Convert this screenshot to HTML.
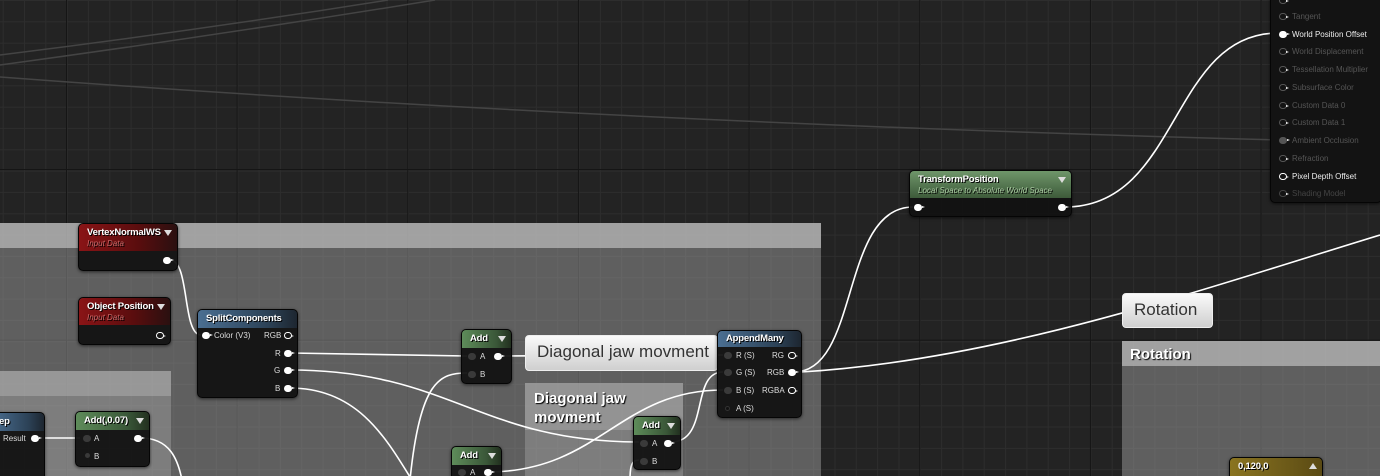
<!DOCTYPE html>
<html><head><meta charset="utf-8"><style>
*{margin:0;padding:0;box-sizing:border-box}
html,body{width:1380px;height:476px;overflow:hidden}
body{position:relative;font-family:"Liberation Sans",sans-serif;}
#w{position:absolute;left:0;top:0;width:1380px;height:476px;overflow:hidden;
background-color:#232323;
background-image:
linear-gradient(to right,#151515 0,#151515 1px,transparent 1px),
linear-gradient(to bottom,#151515 0,#151515 1px,transparent 1px),
linear-gradient(to right,#2d2d2d 0,#2d2d2d 1px,transparent 1px),
linear-gradient(to bottom,#2d2d2d 0,#2d2d2d 1px,transparent 1px);
background-size:170.67px 170.67px,170.67px 170.67px,21.333px 21.333px,21.333px 21.333px;
background-position:66px 169px,66px 169px,2.67px 0px,2.67px 0px;}
.abs{position:absolute}
.cm{position:absolute;background:rgba(155,155,155,0.5)}
.cmh{position:absolute;left:0;right:0;top:0;background:rgba(205,205,205,0.6)}
.node{position:absolute;background:rgba(18,18,18,0.95);border:1px solid #050505;border-radius:5px;box-shadow:0 1px 3px rgba(0,0,0,.6);overflow:hidden}
.hd{height:18px;color:#fff;font-weight:bold;font-size:9.5px;letter-spacing:-0.2px;padding:3px 0 0 8px;text-shadow:1px 1px 0 #000;position:relative;white-space:nowrap}
.hd .sub{display:block;font-style:italic;font-weight:normal;font-size:8px;margin-top:1px;letter-spacing:0}
.tri{position:absolute;right:5px;top:6px;width:0;height:0;border-left:4px solid transparent;border-right:4px solid transparent;border-top:6px solid #ddd}
.red{background:linear-gradient(to right,#8a1416,#5a0d0e 60%,#2a1010)}
.red .sub{color:#c86a6a}
.blue{background:linear-gradient(to right,#4b6f92,#2c4257 70%,#1d2630)}
.green{background:linear-gradient(to right,#5e8c5a,#3a5738 70%,#22301f)}
.t{position:absolute;color:#ddd;font-size:8px;white-space:nowrap}
.pin{position:absolute;width:8px;height:7px;border-radius:4px;background:#fff}
.pin:after{content:"";position:absolute;right:-3px;top:2px;border-top:1.5px solid transparent;border-bottom:1.5px solid transparent;border-left:3px solid #fff}
.ho{background:transparent;border:1.5px solid #fff}
.dim{background:#3a3a3a}.dim:after{display:none}
.bub{position:absolute;border-radius:4px;background:linear-gradient(#fafafa,#cfcfcf);border:1px solid #eee;color:#333;font-size:17px;padding:6px 0 0 11px;white-space:nowrap;overflow:hidden}
.mo .t{color:#555}
</style></head><body><div id="w">
<svg class="abs" style="left:0;top:0" width="1380" height="476">
<path d="M0 55 Q200 30 388 0" stroke="#444" stroke-width="1.5" fill="none"/>
<path d="M0 65 Q220 35 435 0" stroke="#444" stroke-width="1.5" fill="none"/>
<path d="M0 77 Q600 122 1280 140" stroke="#444" stroke-width="1.5" fill="none"/>
</svg>

<div class="cm" style="left:0;top:223px;width:821px;height:253px"><div class="cmh" style="height:25px"></div></div>
<div class="cm" style="left:0;top:371px;width:171px;height:105px"><div class="cmh" style="height:25px;background:rgba(200,200,200,0.35)"></div></div>
<div class="cm" style="left:525px;top:383px;width:158px;height:93px"><div class="cmh" style="height:47px;background:rgba(200,200,200,0.3)"></div>
<div class="abs" style="left:9px;top:6px;color:#fff;font-weight:bold;font-size:15px;line-height:19px;text-shadow:1px 1px 1px #000">Diagonal jaw<br>movment</div></div>
<div class="cm" style="left:1122px;top:341px;width:258px;height:135px"><div class="cmh" style="height:25px"></div>
<div class="abs" style="left:8px;top:5px;color:#fff;font-weight:bold;font-size:15px;text-shadow:1px 1px 1px #000">Rotation</div></div>

<svg class="abs" style="left:0;top:0;z-index:1" width="1380" height="476" fill="none" stroke="#fff" stroke-width="1.6">
<path d="M170 260 C190 260 182 335 201 335"/>
<path d="M290 353 L467 356"/>
<path d="M290 370 C450 370 480 442 639 442"/>
<path d="M290 388 C380 388 400 476 440 520"/>
<path d="M410 480 C420 380 440 373 467 373"/>
<path d="M141 438 C170 438 178 460 182 480"/>
<path d="M37 438 L80 438"/>
<path d="M497 356 L723 355"/>
<path d="M491 472 C600 470 620 390 723 390"/>
<path d="M671 442 C710 442 690 372 723 372"/>
<path d="M630 480 C630 465 632 460 639 460"/>
<path d="M794 372 C860 372 840 207 913 207"/>
<path d="M1065 207 C1180 207 1170 33 1278 33"/>
<path d="M801 372 C1000 360 1200 290 1380 235"/>
</svg>

<div class="bub" style="left:525px;top:335px;width:193px;height:36px;z-index:2">Diagonal jaw movment</div>
<div class="bub" style="left:1122px;top:293px;width:91px;height:35px;z-index:2">Rotation</div>

<div style="position:absolute;left:0;top:0;width:1380px;height:476px;overflow:hidden;z-index:3">
<div class="node" style="left:78px;top:223px;width:100px;height:48px"><div class="hd red" style="height:27px">VertexNormalWS<span class="sub">Input Data</span><i class="tri"></i></div>
<div class="pin" style="left:84px;top:33px"></div></div>
<div class="node" style="left:78px;top:297px;width:93px;height:48px"><div class="hd red" style="height:27px">Object Position<span class="sub">Input Data</span><i class="tri"></i></div>
<div class="pin ho" style="left:77px;top:34px"></div></div>

<div class="node" style="left:197px;top:309px;width:101px;height:89px"><div class="hd blue">SplitComponents</div>
<div class="pin" style="left:4px;top:22px"></div><div class="t" style="left:16px;top:21px">Color (V3)</div>
<div class="t" style="left:66px;top:21px">RGB</div><div class="pin ho" style="left:86px;top:22px"></div>
<div class="t" style="left:77px;top:39px">R</div><div class="pin" style="left:86px;top:40px"></div>
<div class="t" style="left:76px;top:56px">G</div><div class="pin" style="left:86px;top:57px"></div>
<div class="t" style="left:77px;top:74px">B</div><div class="pin" style="left:86px;top:75px"></div></div>

<div class="node" style="left:-10px;top:412px;width:55px;height:70px"><div class="hd blue" style="padding-left:8px">ep</div>
<div class="t" style="left:12px;top:21px">Result</div><div class="pin" style="left:40px;top:22px"></div></div>

<div class="node" style="left:75px;top:411px;width:75px;height:56px"><div class="hd green">Add(,0.07)<i class="tri"></i></div>
<div class="pin dim" style="left:7px;top:23px"></div><div class="t" style="left:18px;top:22px">A</div><div class="pin" style="left:58px;top:23px"></div>
<div class="pin dim" style="top:41px;width:5px;height:5px;left:9px"></div><div class="t" style="left:18px;top:40px">B</div></div>

<div class="node" style="left:461px;top:329px;width:51px;height:55px"><div class="hd green">Add<i class="tri"></i></div>
<div class="pin dim" style="left:6px;top:23px"></div><div class="t" style="left:18px;top:22px">A</div><div class="pin" style="left:32px;top:23px"></div>
<div class="pin dim" style="left:6px;top:41px"></div><div class="t" style="left:18px;top:40px">B</div></div>

<div class="node" style="left:451px;top:446px;width:51px;height:40px"><div class="hd green">Add<i class="tri"></i></div>
<div class="pin dim" style="left:6px;top:22px"></div><div class="t" style="left:18px;top:21px">A</div><div class="pin" style="left:32px;top:22px"></div></div>

<div class="node" style="left:633px;top:416px;width:48px;height:54px"><div class="hd green">Add<i class="tri"></i></div>
<div class="pin dim" style="left:6px;top:23px"></div><div class="t" style="left:18px;top:22px">A</div><div class="pin" style="left:30px;top:23px"></div>
<div class="pin dim" style="left:6px;top:41px"></div><div class="t" style="left:18px;top:40px">B</div></div>

<div class="node" style="left:717px;top:330px;width:85px;height:88px"><div class="hd blue" style="height:16px;padding-top:2px">AppendMany</div>
<div class="pin dim" style="left:6px;top:21px"></div><div class="t" style="left:18px;top:20px">R (S)</div><div class="t" style="left:54px;top:20px">RG</div><div class="pin ho" style="left:70px;top:21px"></div>
<div class="pin dim" style="left:6px;top:38px"></div><div class="t" style="left:18px;top:37px">G (S)</div><div class="t" style="left:49px;top:37px">RGB</div><div class="pin" style="left:70px;top:38px"></div>
<div class="pin dim" style="left:6px;top:56px"></div><div class="t" style="left:18px;top:55px">B (S)</div><div class="t" style="left:44px;top:55px">RGBA</div><div class="pin ho" style="left:70px;top:56px"></div>
<div class="pin dim" style="left:7px;top:75px;width:5px;height:5px;background:#111;border:1px solid #333"></div><div class="t" style="left:18px;top:73px">A (S)</div></div>

<div class="node" style="left:909px;top:170px;width:163px;height:47px"><div class="hd green" style="height:27px;background:linear-gradient(#6f966a,#3d5a3a)">TransformPosition<span class="sub" style="color:#a8c8a0">Local Space to Absolute World Space</span><i class="tri"></i></div>
<div class="pin" style="left:4px;top:33px"></div><div class="pin" style="left:148px;top:33px"></div></div>

<div class="node mo" style="left:1270px;top:-8px;width:112px;height:211px;background:#131313">
<div class="pin ho" style="left:8px;top:4px;border-color:#555"></div>
<div class="pin ho" style="left:8px;top:20px;border-color:#555"></div><div class="t" style="left:21px;top:19px">Tangent</div>
<div class="pin" style="left:8px;top:38px"></div><div class="t" style="left:21px;top:37px;color:#eee">World Position Offset</div>
<div class="pin ho" style="left:8px;top:55px;border-color:#555"></div><div class="t" style="left:21px;top:54px">World Displacement</div>
<div class="pin ho" style="left:8px;top:73px;border-color:#555"></div><div class="t" style="left:21px;top:72px">Tessellation Multiplier</div>
<div class="pin ho" style="left:8px;top:91px;border-color:#555"></div><div class="t" style="left:21px;top:90px">Subsurface Color</div>
<div class="pin ho" style="left:8px;top:109px;border-color:#555"></div><div class="t" style="left:21px;top:108px">Custom Data 0</div>
<div class="pin ho" style="left:8px;top:126px;border-color:#555"></div><div class="t" style="left:21px;top:125px">Custom Data 1</div>
<div class="pin" style="left:8px;top:144px;background:#555"></div><div class="t" style="left:21px;top:143px">Ambient Occlusion</div>
<div class="pin ho" style="left:8px;top:162px;border-color:#555"></div><div class="t" style="left:21px;top:161px">Refraction</div>
<div class="pin ho" style="left:8px;top:180px"></div><div class="t" style="left:21px;top:179px;color:#eee">Pixel Depth Offset</div>
<div class="pin ho" style="left:8px;top:197px;border-color:#444"></div><div class="t" style="left:21px;top:196px;color:#444">Shading Model</div></div>

<div class="node" style="left:1229px;top:457px;width:94px;height:25px"><div class="hd" style="background:linear-gradient(to right,#8a7420,#5a4a14);height:20px;font-size:9.5px">0,120,0<i class="tri" style="border-top:none;border-bottom:6px solid #ddd;top:5px"></i></div></div>
</div>
</div></body></html>
